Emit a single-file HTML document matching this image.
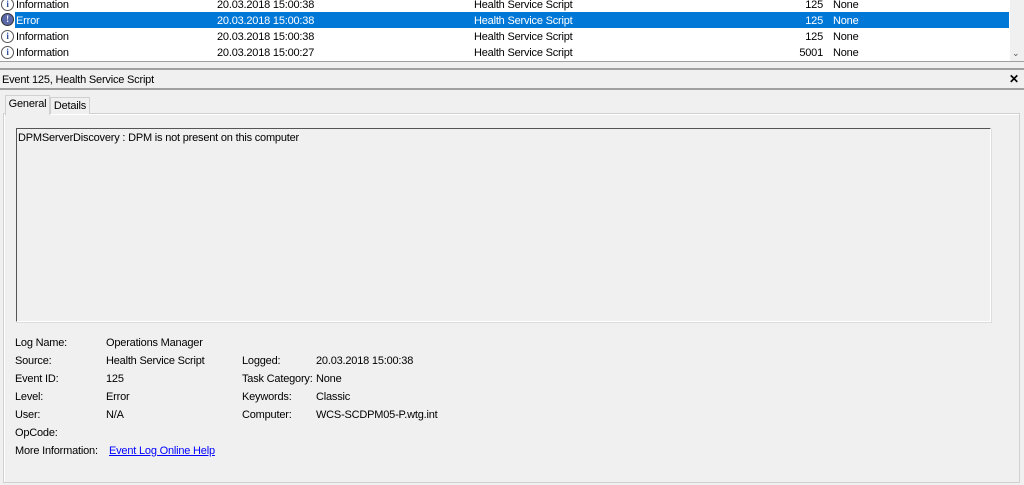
<!DOCTYPE html>
<html><head><style>
body{margin:0;width:1024px;height:485px;background:#f0f0f0;font-family:"Liberation Sans",sans-serif;font-size:11px;letter-spacing:-0.2px;color:#000;position:relative;overflow:hidden}
.a{position:absolute;white-space:nowrap}
.row{position:absolute;left:0;width:1010px;height:16px;line-height:16px}
.sel{background:#0078d7;color:#fff}
.ic{position:absolute;left:1px;top:1px;width:11px;height:11px;border:1px solid #555;border-radius:50%;background:#fff;font:bold 9px "Liberation Serif",serif;text-align:center;line-height:11px;color:#2a4f9e}
.ie{background:#5a68a8;color:#fff;border-color:#333}
</style></head><body>
<div class="a" style="left:0;top:0;width:1010px;height:62px;background:#fff"></div>
<div class="a" style="left:1010px;top:0;width:14px;height:62px;background:#f0f0f0"></div>
<div class="a" style="left:1012px;top:48px;font-size:9px;color:#555">&#8964;</div>

<div class="row" style="top:-3px"><span class="ic">i</span><span class="a" style="left:16px">Information</span><span class="a" style="left:217px">20.03.2018 15:00:38</span><span class="a" style="left:474px">Health Service Script</span><span class="a" style="left:790px;width:33px;text-align:right">125</span><span class="a" style="left:833px">None</span></div>
<div class="row" style="top:12px"><span class="ic ie">!</span><div class="a sel" style="left:15px;width:994px;height:16px"></div><span class="a" style="left:16px;color:#fff;top:1px">Error</span><span class="a" style="left:217px;color:#fff;top:1px">20.03.2018 15:00:38</span><span class="a" style="left:474px;color:#fff;top:1px">Health Service Script</span><span class="a" style="left:790px;width:33px;text-align:right;color:#fff;top:1px">125</span><span class="a" style="left:833px;color:#fff;top:1px">None</span></div>
<div class="row" style="top:29px"><span class="ic">i</span><span class="a" style="left:16px">Information</span><span class="a" style="left:217px">20.03.2018 15:00:38</span><span class="a" style="left:474px">Health Service Script</span><span class="a" style="left:790px;width:33px;text-align:right">125</span><span class="a" style="left:833px">None</span></div>
<div class="row" style="top:45px"><span class="ic">i</span><span class="a" style="left:16px">Information</span><span class="a" style="left:217px">20.03.2018 15:00:27</span><span class="a" style="left:474px">Health Service Script</span><span class="a" style="left:790px;width:33px;text-align:right">5001</span><span class="a" style="left:833px">None</span></div>

<div class="a" style="left:0;top:61px;width:1024px;height:1px;background:#a0a0a0"></div>
<div class="a" style="left:0;top:68px;width:1024px;height:2px;background:#a0a0a0"></div>
<div class="a" style="left:2px;top:73px;line-height:14px">Event 125, Health Service Script</div>
<div class="a" style="left:1009px;top:72px;font-weight:bold;font-size:12px">&#x2715;</div>
<div class="a" style="left:0;top:88px;width:1024px;height:2px;background:#a0a0a0"></div>

<div class="a" style="left:3px;top:113px;width:1015px;height:368px;border:1px solid #d0d0d0;box-shadow:1px 1px 0 #fff inset"></div>
<div class="a" style="left:5px;top:95px;width:43px;height:19px;background:#f0f0f0;border:1px solid #d0d0d0;border-bottom:none;line-height:17px;text-align:center">General</div>
<div class="a" style="left:50px;top:97px;width:38px;height:16px;background:#f0f0f0;border:1px solid #d0d0d0;border-bottom:none;line-height:17px;text-align:center">Details</div>

<div class="a" style="left:16px;top:128px;width:973px;height:192px;border-top:1px solid #555;border-left:1px solid #555;border-right:1px solid #fff;border-bottom:1px solid #fff;box-shadow:1px 1px 0 #ddd"></div>
<div class="a" style="left:18px;top:132px">DPMServerDiscovery : DPM is not present on this computer</div>

<div class="a" style="left:15px;top:337px">Log Name:</div><div class="a" style="left:106px;top:337px">Operations Manager</div>
<div class="a" style="left:15px;top:355px">Source:</div><div class="a" style="left:106px;top:355px">Health Service Script</div>
<div class="a" style="left:15px;top:373px">Event ID:</div><div class="a" style="left:106px;top:373px">125</div>
<div class="a" style="left:15px;top:391px">Level:</div><div class="a" style="left:106px;top:391px">Error</div>
<div class="a" style="left:15px;top:409px">User:</div><div class="a" style="left:106px;top:409px">N/A</div>
<div class="a" style="left:15px;top:427px">OpCode:</div>
<div class="a" style="left:15px;top:445px">More Information:</div><div class="a" style="left:109px;top:445px;color:#00f;text-decoration:underline">Event Log Online Help</div>
<div class="a" style="left:242px;top:355px">Logged:</div><div class="a" style="left:316px;top:355px">20.03.2018 15:00:38</div>
<div class="a" style="left:242px;top:373px">Task Category:</div><div class="a" style="left:316px;top:373px">None</div>
<div class="a" style="left:242px;top:391px">Keywords:</div><div class="a" style="left:316px;top:391px">Classic</div>
<div class="a" style="left:242px;top:409px">Computer:</div><div class="a" style="left:316px;top:409px">WCS-SCDPM05-P.wtg.int</div>
</body></html>
